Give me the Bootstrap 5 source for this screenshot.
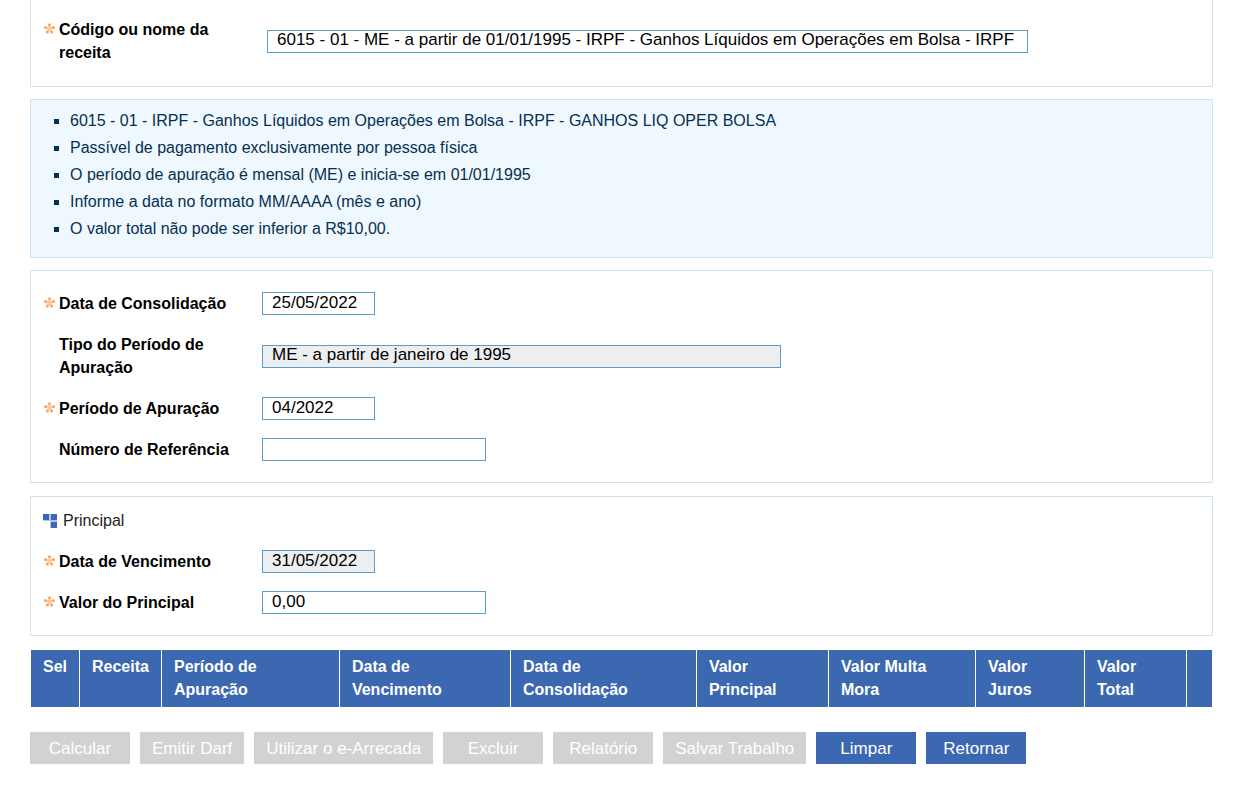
<!DOCTYPE html>
<html lang="pt-BR">
<head>
<meta charset="utf-8">
<meta name="viewport" content="width=device-width, initial-scale=1">
<title>Cálculo do Darf</title>
<link href="https://cdn.jsdelivr.net/npm/bootstrap@5.3.0/dist/css/bootstrap.min.css" rel="stylesheet">
<style>
body { font-family: "Liberation Sans", Arial, sans-serif; font-size: 16px; line-height: 23px; color: #000; background: #fff; }
.page { padding: 0 27px 24px 30px; }
.panel { border: 1px solid #cfe3ef; padding: 21px 12px; margin-bottom: 12px; }
.panel-first { border-top: 0; padding: 18px 12px 22px; }
.panel-period { margin-bottom: 13px; }
.panel-group { padding-top: 12px; margin-bottom: 14px; }
.notes { background: #eff7ff; color: #06304f; padding: 7px 12px 15px 39px; font-size: 16px; line-height: 27px; }
.notes ul { list-style: none; margin: 0; padding: 0; }
.notes li { position: relative; }
.notes li::before { content: ""; position: absolute; left: -16px; top: 12px; width: 5px; height: 5px; background: #06304f; }
.rows { gap: 18px; }
.req { width: 13px; height: 13px; margin: 4px 3px 0 0; flex: none; }
.caption-cell { width: 219px; flex: none; }
.wide-caption { width: 224px; }
.caption-cell label { font-weight: 700; width: 170px; }
.no-mark label { margin-left: 16px; }
.field { height: 23px; padding: 0 9px 2px; border: 1px solid #5a9dcd; border-radius: 0; font-size: 17px; line-height: 20px; color: #000; background: #fff; }
.field[readonly] { background: #eceef0; }
.f-code { width: 761px; } .f-date { width: 113px; } .f-type { width: 519px; } .f-ref { width: 224px; }
.group-title { font-size: 16px; line-height: 23px; font-weight: 400; color: #222; gap: 6px; }
.results { table-layout: fixed; border-collapse: separate; border-spacing: 0; margin: 0 1px; width: calc(100% - 2px); }
.results th { background: #3c67b1; color: #fff; vertical-align: top; text-align: left; padding: 5px 10px 6px 12px; border-right: 1px solid #fff; }
.results th:last-child { border-right: 0; }
.actions { gap: 10px; margin-top: 25px; }
.action { min-width: 100px; height: 32px; border: 0; border-radius: 0; padding: 0 12px; font-size: 17px; line-height: 31px; color: #fff; background: #3c67b1; }
.action:hover { color: #fff; background: #2f5596; }
.action:disabled { color: #fff; background: #d2d2d2; opacity: 1; }
</style>
</head>
<body>
<svg class="d-none">
  <symbol id="star" viewBox="0 0 13 13">
    <path stroke="#fdc79d" stroke-width="2" d="M6.500 7V3M6.500 7L3 5.500M6.500 7L10 5.500M6.500 7L4.500 10M6.500 7L8.500 10"/>
    <g fill="#fba463"><circle cx="6.500" cy="2.800" r="1.500"/><circle cx="2.500" cy="5.500" r="1.500"/><circle cx="10.500" cy="5.500" r="1.500"/><circle cx="4.300" cy="10" r="1.500"/><circle cx="8.700" cy="10" r="1.500"/></g>
  </symbol>
</svg>
<main class="page">
<form>
  <section class="panel panel-first">
    <div class="d-flex align-items-center">
      <div class="caption-cell wide-caption d-flex align-items-start"><svg class="req" aria-hidden="true"><use href="#star"/></svg><label for="code">Código ou nome da receita</label></div>
      <input id="code" class="form-control field f-code" type="text" value="6015 - 01 - ME - a partir de 01/01/1995 - IRPF - Ganhos Líquidos em Operações em Bolsa - IRPF">
    </div>
  </section>

  <section class="panel notes">
    <ul>
      <li>6015 - 01 - IRPF - Ganhos Líquidos em Operações em Bolsa - IRPF - GANHOS LIQ OPER BOLSA</li>
      <li>Passível de pagamento exclusivamente por pessoa física</li>
      <li>O período de apuração é mensal (ME) e inicia-se em 01/01/1995</li>
      <li>Informe a data no formato MM/AAAA (mês e ano)</li>
      <li>O valor total não pode ser inferior a R$10,00.</li>
    </ul>
  </section>

  <section class="panel panel-period rows d-flex flex-column">
    <div class="d-flex align-items-center">
      <div class="caption-cell d-flex align-items-start"><svg class="req" aria-hidden="true"><use href="#star"/></svg><label for="cons">Data de Consolidação</label></div>
      <input id="cons" class="form-control field f-date" type="text" value="25/05/2022">
    </div>
    <div class="d-flex align-items-center">
      <div class="caption-cell no-mark d-flex"><label for="tipo">Tipo do Período de Apuração</label></div>
      <input id="tipo" class="form-control field f-type" type="text" value="ME - a partir de janeiro de 1995" readonly>
    </div>
    <div class="d-flex align-items-center">
      <div class="caption-cell d-flex align-items-start"><svg class="req" aria-hidden="true"><use href="#star"/></svg><label for="per">Período de Apuração</label></div>
      <input id="per" class="form-control field f-date" type="text" value="04/2022">
    </div>
    <div class="d-flex align-items-center">
      <div class="caption-cell no-mark d-flex"><label for="ref">Número de Referência</label></div>
      <input id="ref" class="form-control field f-ref" type="text">
    </div>
  </section>

  <section class="panel panel-group rows d-flex flex-column">
    <h2 class="group-title d-flex align-items-center m-0">
      <svg width="14" height="14" aria-hidden="true"><path fill="#b4c5e1" d="M0 0h14v14H7V7H0z"/><path fill="#3c67b1" d="M0 0h6v6H0zM8 0h6v6H8zM8 8h6v6H8z"/></svg>
      Principal
    </h2>
    <div class="d-flex align-items-center">
      <div class="caption-cell d-flex align-items-start"><svg class="req" aria-hidden="true"><use href="#star"/></svg><label for="venc">Data de Vencimento</label></div>
      <input id="venc" class="form-control field f-date" type="text" value="31/05/2022" readonly>
    </div>
    <div class="d-flex align-items-center">
      <div class="caption-cell d-flex align-items-start"><svg class="req" aria-hidden="true"><use href="#star"/></svg><label for="valor">Valor do Principal</label></div>
      <input id="valor" class="form-control field f-ref" type="text" value="0,00">
    </div>
  </section>

  <table class="results">
    <colgroup><col style="width:4.15%"><col style="width:6.94%"><col style="width:15.07%"><col style="width:14.48%"><col style="width:15.75%"><col style="width:11.18%"><col style="width:12.45%"><col style="width:9.23%"><col style="width:8.63%"><col style="width:2.12%"></colgroup>
    <thead>
      <tr><th scope="col">Sel</th><th scope="col">Receita</th><th scope="col">Período de<br>Apuração</th><th scope="col">Data de<br>Vencimento</th><th scope="col">Data de<br>Consolidação</th><th scope="col">Valor<br>Principal</th><th scope="col">Valor Multa<br>Mora</th><th scope="col">Valor<br>Juros</th><th scope="col">Valor<br>Total</th><th></th></tr>
    </thead>
  </table>

  <div class="actions d-flex flex-wrap">
    <button type="button" class="btn action" disabled>Calcular</button>
    <button type="button" class="btn action" disabled>Emitir Darf</button>
    <button type="button" class="btn action" disabled>Utilizar o e-Arrecada</button>
    <button type="button" class="btn action" disabled>Excluir</button>
    <button type="button" class="btn action" disabled>Relatório</button>
    <button type="button" class="btn action" disabled>Salvar Trabalho</button>
    <button type="reset" class="btn action">Limpar</button>
    <button type="button" class="btn action">Retornar</button>
  </div>
</form>
</main>
<script src="https://cdn.jsdelivr.net/npm/bootstrap@5.3.0/dist/js/bootstrap.bundle.min.js"></script>
</body>
</html>
